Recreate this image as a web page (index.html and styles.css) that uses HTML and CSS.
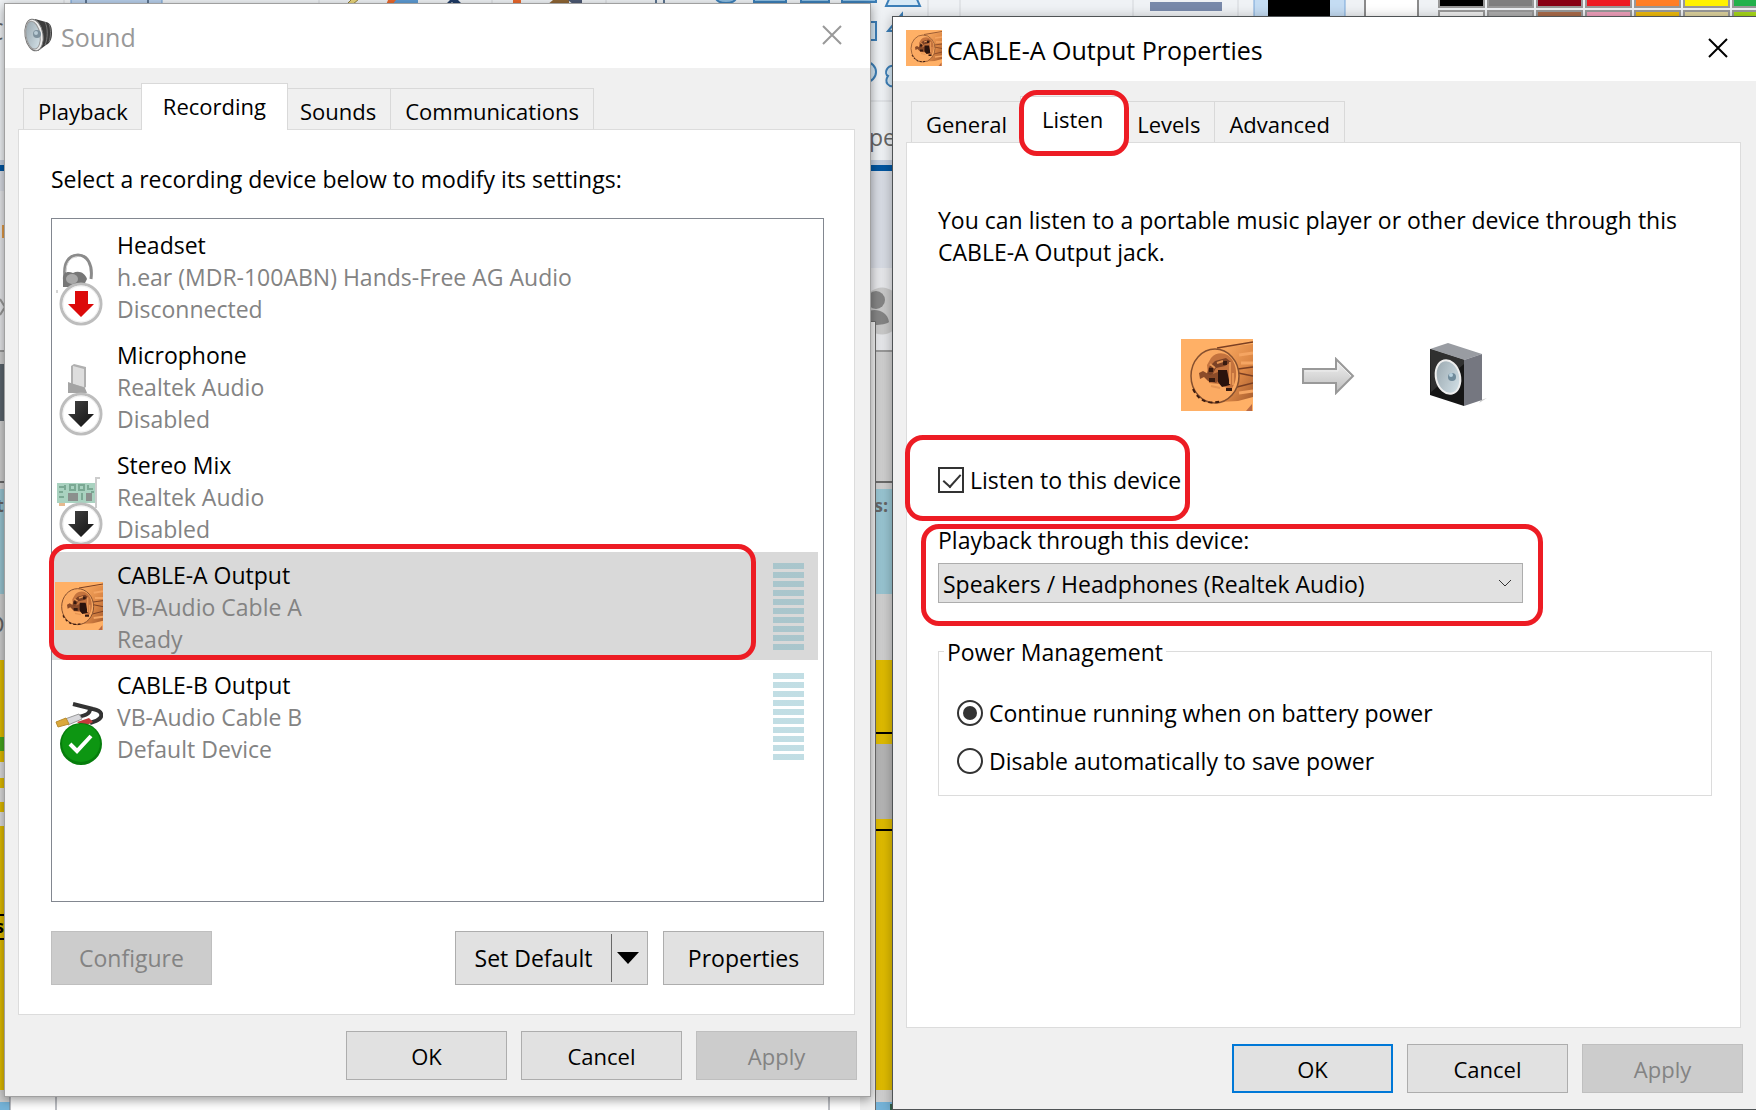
FILE: index.html
```html
<!DOCTYPE html>
<html lang="en">
<head>
<meta charset="utf-8">
<title>Sound</title>
<link rel="stylesheet" href="styles.css">
</head>
<body>
<svg class="defs" aria-hidden="true">
  <defs>
    <linearGradient id="metal" x1="0" y1="0" x2="0" y2="1"><stop offset="0" stop-color="#f4f4f4"/><stop offset="1" stop-color="#bcbcbc"/></linearGradient>
    <linearGradient id="cone" x1="0" y1="0" x2="1" y2="1"><stop offset="0" stop-color="#95a3ab"/><stop offset="1" stop-color="#d8e6ec"/></linearGradient>
    <linearGradient id="brass" x1="0" y1="0" x2="1" y2="1"><stop offset="0" stop-color="#ffb066"/><stop offset=".6" stop-color="#dd8846"/><stop offset="1" stop-color="#a65c2e"/></linearGradient>
    <linearGradient id="ink" x1="0" y1="0" x2="1" y2="1"><stop offset="0" stop-color="#444"/><stop offset="1" stop-color="#111"/></linearGradient>
    <symbol id="plug" viewBox="0 0 72 72">
      <path fill="#ffb066" d="M0 0h72v72H0z"/>
      <path fill="url(#brass)" d="M34 9 72 5v53l-15 4-18 1c14-6 19-17 18-29C56 20 47 11 34 9z"/>
      <path d="M36 9 72 3M57 30l15-2M57 34l15 3M56 48l16-4" fill="none" stroke="#7b3f22" stroke-width="1.5"/>
      <path d="M58 16l14-2M60 24h12M58 54l14-2" fill="none" stroke="#f5a562" stroke-width="3"/>
      <ellipse cx="34" cy="37" rx="24" ry="27" fill="#fbaa62"/>
      <ellipse cx="34" cy="37" rx="24" ry="27" fill="none" stroke="#86502f" stroke-width="1.5"/>
      <path d="M12 50c6 12 15 16 29 12" fill="none" stroke="#3c1c10" stroke-width="2" stroke-dasharray="4 3"/>
      <path d="M30 19c7-8 18-5 22 3 5 9 4 21-2 29l-12-6-10-1-2-18z" fill="#c4733e"/>
      <path d="M28 28l6-6 11-3 5 4-6 4-9 2-5 9h-5z" fill="#7c4226"/>
      <path d="M18 34l4-2 7 4 8-3 4 5-6 6-8-2-4-4-4 2z" fill="#8b4b29"/>
      <path d="M37 31h9l3 15-8 2-4-5z" fill="#2a130d"/>
      <path d="M28 39h6v4h-6zM45 49h6v3h-6zM42 22h4v4h-4zM28 29h4v4h-4z" fill="#361a10"/>
      <path d="M29 25l5 4M49 23v22M52 34v12M30 47l9 2M36 24l6-2" stroke="#e79654" stroke-width="2"/>
      <path d="M71 65v7h-6z" fill="#b96a45"/>
    </symbol>
    <symbol id="badge" viewBox="0 0 44 44">
      <circle cx="22" cy="22" r="20" fill="#fff" stroke="#bdbdbd" stroke-width="3"/>
      <circle cx="22" cy="22" r="18" fill="none" stroke="#eee"/>
      <path d="M16 9h13v13h6L22 35 9 22h7z"/>
    </symbol>
  </defs>
</svg>

<svg class="backdrop" viewBox="0 0 1756 1110" preserveAspectRatio="none" aria-hidden="true">
  <path fill="#eff2f5" d="M0 0h1756v160H0z"/>
  <path stroke="#d3d6da" fill="none" d="M64 0v4M319 0v4M492 0v4M606 0v4M928 0v16M960 0v16M1133 0v16M1238 0v16M860 101h40"/>
  <path fill="#b7cfea" stroke="#6b9bd1" d="M71-1h91v6H71z"/>
  <path stroke="#5d7591" stroke-width="2" d="M86 0v4M148 0v4M656 0v3M664 0v3"/>
  <path fill="#e8d47a" stroke="#8d7a3a" d="M352-1h7l-7 6h-6z"/>
  <path fill="#5d9bd3" d="M392 0h26v4h-30z"/><path fill="#e9682c" d="M388 0h8l-4 5h-6zM513 0h8v5h-8z"/>
  <path fill="#1f3c66" d="M450 0h8l5 5h-8l-3-3-3 3h-4z"/>
  <path fill="#8e6535" d="M553 0h16v5h-22z"/><path fill="#4d5a73" d="M568 0h14v5h-8z"/>
  <g fill="#8dbde0" stroke="#3c7fb8" stroke-width="2"><path d="M716-2a10 5 0 0 0 20 0M754-2h32v4h-32zM801-2h28v4h-28zM842-2h34v4h-34z"/></g>
  <g fill="#d6e9f6" stroke="#3c7fb8" stroke-width="2"><path d="M890-3h26l4 9h-34zM866 22h10v18h-10zM902 14l-14 17h14z"/><circle cx="866" cy="72" r="10"/><path d="M896 66c-10-2-12 8-8 10-4 6 0 12 8 10"/></g>
  <path fill="#7889aa" d="M1150 2h72v9h-72z"/>
  <path fill="#c4dcf3" stroke="#78a6d8" d="M1254-1h91v20h-91z"/><path fill="#000" d="M1268 0h62v16h-62z"/>
  <path fill="#fff" stroke="#8b8b8b" stroke-width="2" d="M1365-2h53v20h-53z"/>
  <g stroke="#999" stroke-width="2">
    <path fill="#000" d="M1439-2h45v9h-45z"/><path fill="#7f7f7f" d="M1488-2h45v9h-45z"/><path fill="#880015" d="M1537-2h45v9h-45z"/><path fill="#ed1c24" d="M1586-2h45v9h-45z"/><path fill="#ff7f27" d="M1635-2h45v9h-45z"/><path fill="#fff200" d="M1684-2h45v9h-45z"/><path fill="#22b14c" d="M1733-2h45v9h-45z"/>
    <path fill="#eee" d="M1439 11h45v9h-45z"/><path fill="#b0b0b0" d="M1488 11h45v9h-45z"/><path fill="#ab6c4b" d="M1537 11h45v9h-45z"/><path fill="#f0a0bc" d="M1586 11h45v9h-45z"/><path fill="#eeba0c" d="M1635 11h45v9h-45z"/><path fill="#ded39e" d="M1684 11h45v9h-45z"/><path fill="#a5d619" d="M1733 11h45v9h-45z"/>
  </g>
  <text x="869" y="146" class="backdrop-text">pe</text>
  <text x="-11" y="40" class="backdrop-text">C</text>
  <path fill="#c5d0e0" d="M0 160h900v5H0z"/><path fill="#0055a0" d="M0 165h900v6H0z"/>
  <path fill="#d8dce4" d="M0 171h900v97H0z"/><path fill="#e6e7ea" d="M0 191h8v159H0zM860 268h40v82h-40z"/>
  <path fill="#e39b46" d="M2 225h3v13H2z"/><path fill="none" stroke="#999" stroke-width="2" d="M0 299l5 8-5 8"/>
  <path fill="#c9c9c9" d="M870 292c8-6 16-6 24 0v38c-8 6-16 6-24 0z"/><circle cx="876" cy="300" r="9" fill="#858585"/><path fill="#858585" d="M860 322c2-16 27-16 29 0-4 4-25 4-29 0z"/>
  <path fill="#cfcfcf" d="M0 351h900v759H0z"/><path fill="#999" d="M0 350h900v2H0z"/>
  <path fill="#5b656e" d="M0 364h5v57H0z"/><path fill="#6b6b6b" d="M0 481h900v2H0z"/>
  <path fill="#98c4d1" d="M0 489h900v105H0z"/>
  <text x="874" y="512" class="backdrop-text small">s:</text><text x="-4" y="512" class="backdrop-text small">t</text>
  <text x="-12" y="633" class="backdrop-text">D</text>
  <path fill="#dfbb00" d="M0 660h900v430H0z"/>
  <path fill="#45a820" d="M0 737h5v14H0z"/><path fill="#dcdcdc" d="M0 762h5v16H0zM0 788h5v14H0zM0 812h5v14H0z"/>
  <path fill="#b5b5b5" d="M870 744h24v75h-24z"/><path fill="#000" d="M870 732h24v2h-24zM870 829h24v2h-24zM0 914h5v2H0zM0 938h5v2H0z"/>
  <text x="-5" y="933" class="backdrop-text small black">s</text>
  <path fill="#75b3d8" d="M0 1102h900v8H0z"/>
  <path fill="#efefef" d="M860 322h15v788h-15z"/><path fill="none" stroke="#6a6a6a" d="M871 321.5h4.500v789"/>
  <path fill="#fff" d="M10 1090h850v20H10z"/><path fill="none" stroke="#7a7f88" d="M10 1096v14M56 1096v14M829 1096v14"/>
  <path fill="#34624a" d="M890 1104h866v6H890z"/>
</svg>

<main class="desktop">
  <section class="window inactive" aria-label="Sound">
    <header class="titlebar">
      <svg class="title-speaker" viewBox="0 0 30 36" aria-hidden="true"><path fill="#3c3c3c" d="M12 2l11 3c5 1 6 6 6 11 0 6-2 10-6 12l-8 6z"/><path d="M22 5c3 6 3 16 0 23M26 7c2 5 2 12 0 18" fill="none" stroke="#777"/><g transform="rotate(-9 11 18)"><ellipse cx="11" cy="18" rx="9" ry="16" fill="#eee" stroke="#777"/><ellipse cx="10" cy="18" rx="7" ry="14" fill="url(#cone)" stroke="#999"/></g><circle cx="14" cy="17" r="4" fill="#7e919d"/><circle cx="13" cy="16" r="2" fill="#b9cbd5"/></svg>
      <h1>Sound</h1>
      <button class="close" aria-label="Close"><svg viewBox="0 0 20 20"><path d="M1 1l18 18M19 1 1 19"/></svg></button>
    </header>
    <nav class="tabs">
      <button>Playback</button><button class="active">Recording</button><button>Sounds</button><button>Communications</button>
    </nav>
    <div class="panel recording">
      <p id="pick">Select a recording device below to modify its settings:</p>
      <ul class="devices" aria-labelledby="pick">
        <li>
          <svg class="device-icon" viewBox="0 0 48 78"><path d="M10 25C8 11 14 3 23 3s15 9 13 24" fill="none" stroke="#8b8b8b" stroke-width="3"/><path d="M11 20C11 10 16 5 22 5" fill="none" stroke="#d6d6d6"/><path d="M8 28c-1-8 5-9 10-7 6-3 12 0 14 6l-4 8H8z" fill="#777"/><ellipse cx="17" cy="27" rx="6" ry="5" fill="#a9a9a9"/><path d="M2 38v3" stroke="#aaa" fill="none"/><use href="#badge" x="4" y="30" width="44" height="44" fill="#dc0a0a"/></svg>
          <div class="device"><strong>Headset</strong><span>h.ear (MDR-100ABN) Hands-Free AG Audio</span><span>Disconnected</span></div>
        </li>
        <li>
          <svg class="device-icon" viewBox="0 0 48 78"><path d="M16 4l3-2 12 3v20l-3 2-12-4z" fill="#b0b0b0"/><path d="M18 4l11 3v18l-11-3z" fill="#dedede"/><path d="M13 20l17 6 2 5H13z" fill="#a4a4a4"/><use href="#badge" x="4" y="30" width="44" height="44" fill="url(#ink)"/></svg>
          <div class="device"><strong>Microphone</strong><span>Realtek Audio</span><span>Disabled</span></div>
        </li>
        <li>
          <svg class="device-icon" viewBox="0 0 48 78"><path d="M2 11h39v20H2z" fill="#a9d2c0"/><path d="M4 15h5M4 20h4M4 25h5M10 13v5M15 13v5h5v-5zM24 13v5h5v-5zM33 13v4h5M27 21v7M36 20h3" fill="none" stroke="#7ba994" stroke-width="2"/><path d="M13 21h10v8H13zM31 21h6v8h-6z" fill="#8b8f8d"/><path d="M4 31h6v3H4z" fill="#e5b98f"/><path d="M41 36V6h4" fill="none" stroke="#ccc" stroke-width="2"/><use href="#badge" x="4" y="30" width="44" height="44" fill="url(#ink)"/></svg>
          <div class="device"><strong>Stereo Mix</strong><span>Realtek Audio</span><span>Disabled</span></div>
        </li>
        <li class="selected">
          <svg class="plug-medium" aria-hidden="true"><use href="#plug"/></svg>
          <div class="device"><strong>CABLE-A Output</strong><span>VB-Audio Cable A</span><span>Ready</span></div>
          <div class="meter"></div>
          <i class="mark mark-device"></i>
        </li>
        <li>
          <svg class="device-icon" viewBox="0 0 48 78"><path d="M18 12l20 5c10 2 11 8 3 12l-6 2M35 17c0 5-4 6-12 8" fill="none" stroke="#333" stroke-width="4"/><path d="M10 27l14-5 3 5-14 6z" fill="#d8d8dc" stroke="#999"/><path d="M1 30l10-4 3 6-11 3z" fill="#dba83a" stroke="#b98c2e"/><path d="M22 30l12-4 4 4-10 5z" fill="#c23c3c"/><circle cx="26" cy="52" r="21" fill="#067d0c"/><circle cx="26" cy="51" r="19" fill="#0d9612"/><path d="M15 52l7 7 14-15" fill="none" stroke="#fff" stroke-width="4"/></svg>
          <div class="device"><strong>CABLE-B Output</strong><span>VB-Audio Cable B</span><span>Default Device</span></div>
          <div class="meter"></div>
        </li>
      </ul>
      <div class="actions">
        <button class="btn" disabled>Configure</button>
        <div class="split"><button>Set Default</button><button class="split-arrow" aria-label="More defaults"><svg viewBox="0 0 22 12"><path d="M0 0h22L11 12z"/></svg></button></div>
        <button class="btn">Properties</button>
      </div>
    </div>
    <footer class="dialog-buttons"><button class="btn">OK</button><button class="btn">Cancel</button><button class="btn" disabled>Apply</button></footer>
  </section>

  <section class="window front" aria-label="CABLE-A Output Properties">
    <header class="titlebar">
      <svg class="plug-small" aria-hidden="true"><use href="#plug"/></svg>
      <h1>CABLE-A Output Properties</h1>
      <button class="close" aria-label="Close"><svg viewBox="0 0 20 20"><path d="M1 1l18 18M19 1 1 19"/></svg></button>
    </header>
    <nav class="tabs">
      <button>General</button><button class="active">Listen<i class="mark mark-tab"></i></button><button>Levels</button><button>Advanced</button>
    </nav>
    <div class="panel listen">
      <p>You can listen to a portable music player or other device through this<br>CABLE-A Output jack.</p>
      <div class="route">
        <svg class="plug-large" aria-hidden="true"><use href="#plug"/></svg>
        <svg class="route-arrow" viewBox="0 0 54 38"><path d="M2 12h33V2l17 17-17 17V26H2z" fill="url(#metal)" stroke="#999" stroke-width="2"/><path d="M4 14h33V6l13 13" fill="none" stroke="#eee"/></svg>
        <svg class="route-speaker" viewBox="0 0 60 66"><path d="M52 58l6-2-8 5z" fill="#ccc"/><path d="M1 7 19 1l34 11-18 6z" fill="#999ca2"/><path d="M35 18l18-6v46l-18 6z" fill="#757780"/><path d="M1 7l34 11v46L1 53z" fill="#151515"/><path d="M1 7l34 11v4L2 50z" fill="#303030"/><ellipse cx="19" cy="35" rx="12" ry="17" fill="url(#cone)" stroke="#eee" stroke-width="2" transform="rotate(-14 19 35)"/><circle cx="23" cy="35" r="4" fill="#708b9b"/><circle cx="22" cy="33" r="2" fill="#b8d1de"/></svg>
      </div>
      <label class="choice listen-choice"><input type="checkbox" checked>Listen to this device<i class="mark mark-listen"></i></label>
      <div class="playback">
        <label for="output">Playback through this device:</label>
        <div class="select"><select id="output"><option>Speakers / Headphones (Realtek Audio)</option></select><svg viewBox="0 0 14 8"><path d="M1 1l6 6 6-6"/></svg></div>
        <i class="mark mark-playback"></i>
      </div>
      <fieldset>
        <legend>Power Management</legend>
        <label class="choice"><input type="radio" name="power" checked>Continue running when on battery power</label>
        <label class="choice"><input type="radio" name="power">Disable automatically to save power</label>
      </fieldset>
    </div>
    <footer class="dialog-buttons"><button class="btn primary">OK</button><button class="btn">Cancel</button><button class="btn" disabled>Apply</button></footer>
  </section>
</main>
</body>
</html>
```
FILE: styles.css
```css
* { box-sizing: border-box; }
body {
  margin: 0;
  position: relative;
  overflow: hidden;
  font: 23px/32px "Open Sans", "Noto Sans", sans-serif;
  color: #000;
}
p, h1, ul { margin: 0; padding: 0; }
button, select { font: inherit; color: inherit; border-radius: 0; margin: 0; }
svg { display: block; flex: none; }

.defs { position: absolute; width: 0; height: 0; }
.backdrop { position: absolute; left: 0; top: 0; width: 100%; height: 100%; z-index: -1; }
.backdrop-text { font-size: 23px; fill: #666; }
.backdrop-text.small { font-size: 18px; font-weight: 700; }
.backdrop-text.black { fill: #000; }

.desktop {
  display: grid;
  grid-template-columns: 867fr 864fr;
  column-gap: 21px;
  align-items: start;
  min-height: 100vh;
  padding: 3px 0 0 4px;
}
.window { background: #f0f0f0; border: 1px solid #4f5355; }
.inactive { border-color: #a0a0a0; box-shadow: 0 3px 10px rgba(0, 0, 0, .4); }
.front { margin-top: 13px; border-right: 0; box-shadow: 0 2px 12px rgba(0, 0, 0, .3); }

.titlebar {
  display: flex;
  align-items: center;
  height: 64px;
  padding: 0 28px 2px 13px;
  background: #fff;
}
.titlebar h1 { flex: 1; padding-top: 3px; margin-left: 5px; font-size: 25px; font-weight: 400; }
.inactive .titlebar { color: #999; padding-left: 18px; }
.inactive .titlebar h1 { margin-left: 8px; }
.title-speaker { width: 30px; height: 36px; }
.plug-small { width: 36px; height: 36px; }
.plug-medium { width: 48px; height: 48px; margin-top: 30px; }
.plug-large { width: 72px; height: 72px; }
.close { border: 0; padding: 0; background: none; }
.close svg { width: 20px; height: 20px; fill: none; stroke: #000; stroke-width: 2; }
.inactive .close svg { stroke: #999; }

.tabs { display: flex; align-items: flex-end; height: 61px; padding-left: 18px; font-size: 22px; }
.tabs button {
  height: 41px;
  padding: 4px 14px 0;
  border: 1px solid #d9d9d9;
  border-width: 1px 1px 0 0;
  background: #f0f0f0;
  line-height: 32px;
}
.tabs button:first-child { border-left-width: 1px; }
.tabs button.active {
  position: relative;
  z-index: 1;
  height: 47px;
  margin: 0 -2px -1px;
  padding: 0 21px 2px;
  border-left-width: 1px;
  background: #fff;
}

.panel { margin: 0 15px 0 13px; border: 1px solid #dcdcdc; background: #fff; }
.recording { padding: 33px 30px 29px 32px; }
.listen { min-height: 886px; padding: 61px 28px 0 31px; }

.devices {
  display: flex;
  flex-direction: column;
  gap: 2px;
  min-height: 684px;
  margin-top: 23px;
  padding: 3px 5px 0 0;
  border: 1px solid #828790;
  list-style: none;
}
.devices li { position: relative; display: flex; gap: 14px; height: 108px; padding: 0 14px 0 3px; }
.devices .selected { background: #d9d9d9; }
.device-icon { width: 48px; height: 78px; margin-top: 30px; }
.device { display: flex; flex: 1; flex-direction: column; padding-top: 7px; white-space: nowrap; }
.device strong { font-weight: 400; }
.device span { color: #838383; }
.meter {
  width: 31px;
  height: 87px;
  margin-top: 11px;
  background: repeating-linear-gradient(rgba(88, 165, 182, .37) 0 6px, transparent 6px 9px);
}

.actions { display: flex; gap: 15px; margin-top: 29px; }
.actions .btn { height: 54px; }
.btn { width: 161px; height: 49px; padding: 0; border: 1px solid #adadad; background: #e1e1e1; }
.btn:disabled { border-color: #bfbfbf; background: #ccc; color: #838383; }
.primary { border: 2px solid #0078d7; }
.split { display: flex; align-items: center; width: 193px; margin-left: auto; border: 1px solid #adadad; background: #e1e1e1; }
.split button { height: 48px; padding: 0; border: 0; background: none; flex: 1; }
.split .split-arrow { flex: none; width: 36px; padding-left: 5px; border-left: 1px solid #696969; }
.split-arrow svg { width: 22px; height: 12px; }
.dialog-buttons { display: flex; justify-content: flex-end; gap: 14px; padding: 16px 13px; font-size: 22px; }

.route { display: flex; align-items: center; justify-content: center; margin-top: 71px; padding-left: 20px; }
.route-arrow { width: 54px; height: 38px; margin: 2px 74px 0 48px; }
.route-speaker { width: 60px; height: 66px; }

.choice { position: relative; display: flex; align-items: center; gap: 6px; width: max-content; padding-top: 1px; }
.choice input {
  appearance: none;
  position: relative;
  flex: none;
  width: 26px;
  height: 26px;
  margin: 0 0 1px;
  border: 2px solid #333;
  background: #fff;
}
.choice input[type="radio"] { border-radius: 50%; }
.choice input[type="radio"]:checked::after {
  content: "";
  position: absolute;
  inset: 4px;
  border-radius: 50%;
  background: #333;
}
.choice input[type="checkbox"]:checked::after {
  content: "";
  position: absolute;
  left: 7px;
  top: 1px;
  width: 8px;
  height: 15px;
  border: solid #333;
  border-width: 0 2px 2px 0;
  transform: rotate(42deg);
}
.listen-choice { margin-top: 52px; }
.playback { position: relative; width: 585px; margin-top: 28px; }
.playback label { display: block; }
.select { position: relative; margin-top: 7px; }
.select select {
  appearance: none;
  display: block;
  width: 100%;
  height: 40px;
  padding: 2px 4px 0;
  border: 1px solid #adadad;
  background: #e1e1e1;
}
.select svg { position: absolute; right: 11px; top: 16px; width: 14px; height: 8px; fill: none; stroke: #333; pointer-events: none; }

fieldset { margin: 32px 0 0; padding: 28px 18px 18px; border: 1px solid #dcdcdc; }
legend { margin-left: -13px; padding: 1px 3px 0; }
fieldset .choice + .choice { margin-top: 15px; }

.mark { position: absolute; border: 5px solid #ed1c24; border-radius: 18px; pointer-events: none; }
.mark-device { inset: -8px 62px 0 -3px; }
.mark-tab { inset: -7px -5px -13px -2px; }
.mark-listen { inset: -28px -9px -25px -33px; }
.mark-playback { inset: 0 -20px -23px -17px; }
```
